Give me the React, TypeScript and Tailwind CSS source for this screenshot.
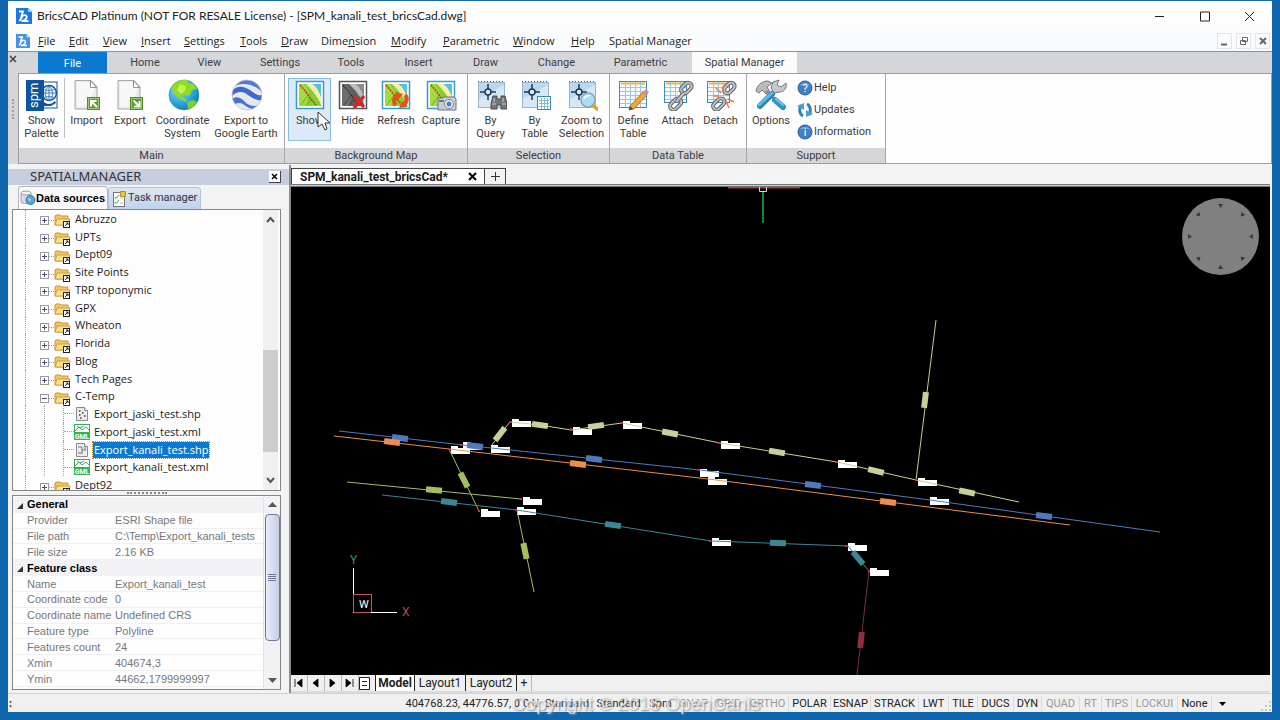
import React from "react";

type IconProps = { className?: string };

const menus = [
    { before: "", key: "F", after: "ile", width: "w-[31px]" },
    { before: "", key: "E", after: "dit", width: "w-[34px]" },
    { before: "", key: "V", after: "iew", width: "w-[38px]" },
    { before: "", key: "I", after: "nsert", width: "w-[43px]" },
    { before: "", key: "S", after: "ettings", width: "w-[56px]" },
    { before: "", key: "T", after: "ools", width: "w-[41px]" },
    { before: "", key: "D", after: "raw", width: "w-[40px]" },
    { before: "Dime", key: "n", after: "sion", width: "w-[70px]" },
    { before: "", key: "M", after: "odify", width: "w-[52px]" },
    { before: "", key: "P", after: "arametric", width: "w-[70px]" },
    { before: "", key: "W", after: "indow", width: "w-[58px]" },
    { before: "", key: "H", after: "elp", width: "w-[38px]" },
    { before: "Spatial Manager", key: "", after: "", width: "w-[90px]" },
];

const ribbonTabs = [
    { name: "Home", width: "w-[52px]" },
    { name: "View", width: "w-[53px]" },
    { name: "Settings", width: "w-[64px]" },
    { name: "Tools", width: "w-[54px]" },
    { name: "Insert", width: "w-[57px]" },
    { name: "Draw", width: "w-[53px]" },
    { name: "Change", width: "w-[65px]" },
    { name: "Parametric", width: "w-[79px]" },
    { name: "Spatial Manager", width: "w-[105px]" },
];

const treeRows = [
    { name: "Abruzzo", kind: "folder" },
    { name: "UPTs", kind: "folder" },
    { name: "Dept09", kind: "folder" },
    { name: "Site Points", kind: "folder" },
    { name: "TRP toponymic", kind: "folder" },
    { name: "GPX", kind: "folder" },
    { name: "Wheaton", kind: "folder" },
    { name: "Florida", kind: "folder" },
    { name: "Blog", kind: "folder" },
    { name: "Tech Pages", kind: "folder" },
    { name: "C-Temp", kind: "open" },
    { name: "Export_jaski_test.shp", kind: "points" },
    { name: "Export_jaski_test.xml", kind: "gml" },
    { name: "Export_kanali_test.shp", kind: "lines", selected: true },
    { name: "Export_kanali_test.xml", kind: "gml" },
    { name: "Dept92", kind: "folder" },
];

const properties = [
    { label: "General", head: true },
    { label: "Provider", value: "ESRI Shape file" },
    { label: "File path", value: "C:\\Temp\\Export_kanali_tests" },
    { label: "File size", value: "2.16 KB" },
    { label: "Feature class", head: true },
    { label: "Name", value: "Export_kanali_test" },
    { label: "Coordinate code", value: "0" },
    { label: "Coordinate name", value: "Undefined CRS" },
    { label: "Feature type", value: "Polyline" },
    { label: "Features count", value: "24" },
    { label: "Xmin", value: "404674,3" },
    { label: "Ymin", value: "44662,1799999997" },
];

/* ---------- ribbon icons ---------- */

const SpmIcon = () => (
    <svg width="32" height="32" viewBox="0 0 32 32">
        <rect x="14" y="3" width="17" height="26" fill="#fff" stroke="#0d56a0" />
        <circle cx="23" cy="14" r="7.500" fill="#eef4fb" stroke="#0d56a0" strokeWidth="1.500" />
        <path d="M23 7v15M15.500 14h15M17 10c4 2 8 2 12 0M17 19c4-2 8-2 12 0M23 7c-5 5-5 10 0 15M23 7c5 5 5 10 0 15" stroke="#2a6ab0" strokeWidth=".8" fill="none" />
        <path d="M16 21c4 5 9 5 13 1l1 2-5 3h-9z" fill="#0d56a0" />
        <path d="M18 1v31H0V1z" fill="#0a559e" />
        <text transform="translate(12 29) rotate(-90)" fontSize="13" fill="#fff" fontFamily="Roboto, sans-serif">spm</text>
    </svg>
);

const PageIcon = ({ out }: { out?: boolean }) => (
    <svg width="32" height="32" viewBox="0 0 32 32">
        <path d="M4 1.500h16l6 6V30H4z" fill="#e9eaea" stroke="#a6a8aa" />
        <path d="M6 3h12l6 8-10 17H6z" fill="#fafafa" opacity=".8" />
        <path d="M19.500 1.500v7h6z" fill="#fff" stroke="#777" strokeWidth=".8" />
        <rect x="16.500" y="18.500" width="12" height="12" fill="#5c9c2b" stroke="#4f8f22" />
        <rect x="17.500" y="19.500" width="10" height="10" fill="none" stroke="#9cc878" />
        {out ? (
            <path d="M19.500 21.500l5.500 5.500M25.500 22v5.500H20" stroke="#fff" strokeWidth="2" fill="none" />
        ) : (
            <path d="M26 28l-6-6M20 27.500V22h5.500" stroke="#fff" strokeWidth="2" fill="none" />
        )}
    </svg>
);

const GlobeIcon = () => (
    <svg width="32" height="32" viewBox="0 0 32 32">
        <defs>
            <radialGradient id="sea" cx=".35" cy=".3" r=".8">
                <stop offset="0" stopColor="#8fdcf8" />
                <stop offset=".6" stopColor="#2aa5dd" />
                <stop offset="1" stopColor="#0c6fae" />
            </radialGradient>
        </defs>
        <circle cx="17" cy="16" r="15" fill="url(#sea)" stroke="#2b87b5" strokeWidth=".6" />
        <path d="M8 4c4-3 9-4 12-3l2 3 5 1 3 5-5 1-2 5-3 1-4-2-1 3 5 3-1 2-6-3-5-4-4-7z" fill="#8edb2a" />
        <path d="M13 5l6 2-1 5-4 3-4-4z" fill="#c3f24a" />
        <path d="M20 23l6-2 4 2-4 5-5 2z" fill="#7ed321" />
    </svg>
);

const EarthIcon = () => (
    <svg width="32" height="32" viewBox="0 0 32 32">
        <defs>
            <clipPath id="ball">
                <circle cx="17" cy="16" r="15" />
            </clipPath>
        </defs>
        <g clipPath="url(#ball)">
            <rect width="33" height="32" fill="#e6e8f0" />
            <path d="M5 7c4-8 17-9 24-1l3 7C24 5 13 3 5 7z" fill="#5577cf" />
            <path d="M2 12c5-6 12-5 18-1 5 4 9 6 12 5v5c-7 1-12-4-17-7-5-2-9-1-13 3z" fill="#3f68cc" />
            <path d="M2 20c6-4 10 0 14 4 4 3 9 4 13 2l-3 4c-5 1-9-2-13-5-4-2-7-1-9 1z" fill="#4c72d2" />
        </g>
        <circle cx="17" cy="16" r="15" fill="none" stroke="#b7bfd8" strokeWidth=".8" />
    </svg>
);

const MapBase = ({ grey }: { grey?: boolean }) => (
    <g>
        <rect x="2.500" y="2.500" width="27" height="27" fill="#fff" stroke={grey ? "#555" : "#3a9cc0"} strokeWidth="1.500" />
        <rect x="5" y="5" width="22" height="22" fill={grey ? "#5e5e5e" : "#86cf2e"} />
        <path d="M5 5h5l5 9-3 13H5z" fill={grey ? "#6e6e6e" : "#a2dc3c"} />
        <path d="M12 5h9l6 12v9c-3-8-8-14-15-21z" fill={grey ? "#bdbdbd" : "#f6edb0"} />
        <path d="M18 5h9v14c-1-6-4-11-9-14z" fill={grey ? "#8b8b8b" : "#55bfe4"} />
        <path d="M14 16l-7 10M17 20l-5 7" stroke={grey ? "#444" : "#6fae2a"} />
        <path d="M6 6l6 7 5 7 5 6" stroke={grey ? "#333" : "#b5391f"} strokeWidth="1.500" strokeDasharray="2 1" fill="none" />
    </g>
);

const ShowIcon = () => (
    <svg width="32" height="32" viewBox="0 0 32 32">
        <MapBase />
    </svg>
);
const HideIcon = () => (
    <svg width="32" height="32" viewBox="0 0 32 32">
        <MapBase grey />
        <path d="M17 18l10 10M27 17L17 29" stroke="#d9242e" strokeWidth="3.500" />
    </svg>
);
const RefreshIcon = () => (
    <svg width="32" height="32" viewBox="0 0 32 32">
        <MapBase />
        <path d="M16 26a6 6 0 0 1 2-10M25 16a6 6 0 0 1-3 10" stroke="#e2541a" strokeWidth="4" fill="none" />
        <path d="M15 13l8 2-5 6zM28 28l-9 1 3-7z" fill="#e2541a" />
    </svg>
);
const CaptureIcon = () => (
    <svg width="32" height="32" viewBox="0 0 32 32">
        <MapBase />
        <path d="M13 19h4l2-1h10l2 2v11H13z" fill="#c9ccd2" stroke="#70747c" />
        <rect x="14" y="21" width="5" height="2" fill="#70747c" />
        <circle cx="24" cy="25" r="4.500" fill="#f2f4f7" stroke="#7d828c" />
        <circle cx="24" cy="25" r="2.500" fill="#4c7fc9" />
    </svg>
);

const QueryBase = () => (
    <g>
        <rect x="3.500" y="3.500" width="26" height="25" fill="#bcd8ee" stroke="#9bb4c8" />
        <path d="M4 20L29 6v22H4z" fill="#d7e8f5" />
        <path d="M3 2.500h27" stroke="#555" strokeDasharray="1 2" />
        <path d="M13 5v16M5 13h16" stroke="#1c3b55" strokeWidth="1.500" />
        <circle cx="13" cy="13" r="3" fill="#d9ebf8" stroke="#1c3b55" strokeWidth="1.500" />
    </g>
);
const ByQueryIcon = () => (
    <svg width="32" height="32" viewBox="0 0 32 32">
        <QueryBase />
        <path d="M18 17h4v3h4v-3h4l2 8v5h-6v-4h-4v4h-6v-5z" fill="#74777a" stroke="#484a4c" />
        <path d="M17 25h4M27 25h4M19 19v4M28 19v4" stroke="#c6c9cb" />
    </svg>
);
const ByTableIcon = () => (
    <svg width="32" height="32" viewBox="0 0 32 32">
        <QueryBase />
        <rect x="18.500" y="17.500" width="13" height="13" fill="#fff" stroke="#3a87b8" />
        <path d="M22.500 19v11M25.500 19v11M28.500 19v11M20 21.500h10M20 24.500h10M20 27.500h10" stroke="#8ab9d6" />
    </svg>
);
const ZoomIcon = () => (
    <svg width="32" height="32" viewBox="0 0 32 32">
        <QueryBase />
        <path d="M27 26l4 4" stroke="#d6a62c" strokeWidth="3.500" strokeLinecap="round" />
        <circle cx="22" cy="21" r="7" fill="#a8dcf5" fillOpacity=".9" stroke="#8fa3b0" strokeWidth="1.500" />
        <path d="M18 20c1-3 4-4 6-3" stroke="#fff" strokeWidth="1.500" fill="none" />
    </svg>
);

const GridBase = ({ small }: { small?: boolean }) => (
    <g>
        <rect x="2.500" y="2.500" width={small ? 22 : 27} height={small ? 21 : 26} fill="#f4faff" stroke="#3d8bb5" />
        <path d={small ? "M4 4.500h19" : "M4 4.500h24"} stroke="#e8b63c" strokeWidth="2" />
        <path d={small ? "M8.500 3v20M13.500 3v20M18.500 3v20M3 8.500h21M3 12.500h21M3 16.500h21M3 20.500h21" : "M8.500 3v25M13.500 3v25M18.500 3v25M23.500 3v25M3 8.500h26M3 12.500h26M3 16.500h26M3 20.500h26M3 24.500h26"} stroke="#9cc7df" />
    </g>
);
const DefineIcon = () => (
    <svg width="32" height="32" viewBox="0 0 32 32">
        <GridBase />
        <path d="M13 27L26 13l4 3-13 14-5 1z" fill="#f0a63a" stroke="#9c6518" strokeWidth=".8" />
        <path d="M26 13l3-3 3 3-2 3z" fill="#c98daf" />
        <path d="M12 31l1-4 3 3z" fill="#5b4522" />
    </svg>
);
const Links = () => (
    <g fill="none">
        <g stroke="#606366" strokeWidth="4">
            <rect x="19" y="6" width="12" height="7" rx="3.500" transform="rotate(-45 24 10)" />
            <rect x="7" y="22" width="13" height="7" rx="3.500" transform="rotate(-45 13 25)" />
        </g>
        <g stroke="#bfc2c5" strokeWidth="2">
            <rect x="19" y="6" width="12" height="7" rx="3.500" transform="rotate(-45 24 10)" />
            <rect x="7" y="22" width="13" height="7" rx="3.500" transform="rotate(-45 13 25)" />
        </g>
    </g>
);
const AttachIcon = () => (
    <svg width="32" height="32" viewBox="0 0 32 32">
        <GridBase small />
        <Links />
        <path d="M15 22l7-8" stroke="#606366" strokeWidth="4" />
        <path d="M15 22l7-8" stroke="#c6c9cc" strokeWidth="2" />
    </svg>
);
const DetachIcon = () => (
    <svg width="32" height="32" viewBox="0 0 32 32">
        <GridBase small />
        <Links />
        <path d="M16 14l-5-5M18 13V7M14 17H8M23 20l6 3M21 22l3 7" stroke="#ee7a37" strokeWidth="1.500" />
    </svg>
);
const OptionsIcon = () => (
    <svg width="32" height="32" viewBox="0 0 32 32">
        <path d="M1 12C2 6 7 2 13 2l4 2-5 4 3 5-4 2-4-4-3 3z" fill="#b9bcbf" stroke="#77797c" />
        <path d="M18 3l6-2-2 5 4 2 5-4c1 5-1 8-6 9l-6 1-3-5z" fill="#c6c8ca" stroke="#77797c" />
        <path d="M11 12l8 8" stroke="#8d9093" strokeWidth="3" />
        <path d="M17 15L5 27" stroke="#2685b8" strokeWidth="6" strokeLinecap="round" />
        <path d="M17 14L4 26" stroke="#62b9e4" strokeWidth="3" strokeLinecap="round" />
        <path d="M20 21l8 7" stroke="#2f93c7" strokeWidth="6" strokeLinecap="round" />
        <path d="M21 20l7 6" stroke="#74c3e8" strokeWidth="2" strokeLinecap="round" />
    </svg>
);

const RoundBadge = ({ glyph }: { glyph: string }) => (
    <svg width="16" height="16" viewBox="0 0 16 16">
        <circle cx="8" cy="8" r="7" fill="#3f7fc6" stroke="#2a5b98" />
        <path d="M2.500 6a6 5 0 0 1 11 0c-3-2-8-2-11 0z" fill="#7fb0e2" />
        <text x="8" y="12" textAnchor="middle" fontSize="11" fill="#fff" fontFamily="Roboto, sans-serif">{glyph}</text>
    </svg>
);
const UpdatesIcon = () => (
    <svg width="16" height="16" viewBox="0 0 16 16">
        <path d="M6 14C2 12 2 6 4 3M10 2c4 2 4 8 2 11" stroke="#3183b4" strokeWidth="3" fill="none" />
        <path d="M0 4l7-3v7zM16 12l-7 3V8z" fill="#4f9dcc" />
    </svg>
);

const AppLogo = ({ className }: IconProps) => (
    <svg className={className} viewBox="0 0 16 16">
        <path d="M0 0h12l4 4v12H0z" fill="#1a78e0" />
        <path d="M12 0l4 4h-4z" fill="#9cc9f7" />
        <path d="M3 3.500h4L5 9.500M3.500 13l3-5c3-2 5 0 4 2s-3 3-5 3h7" stroke="#fff" strokeWidth="1.800" fill="none" />
    </svg>
);

/* ---------- ribbon ---------- */

const BigButton: React.FC<{ icon: React.ReactNode; lines: string[]; width: string; active?: boolean }> = ({ icon, lines, width, active }) => (
    <button className={`flex h-[63px] shrink-0 flex-col items-center border ${width} ${active ? "border-[#86bbe4] bg-[#dce9f7]" : "border-transparent"}`}>
        {icon}
        <span className="mt-[3px] flex flex-col leading-[13px] whitespace-nowrap">
            {lines.map((line) => (
                <span key={line}>{line}</span>
            ))}
        </span>
    </button>
);

const Group: React.FC<{ title: string; width: string; children: React.ReactNode }> = ({ title, width, children }) => (
    <div className={`flex shrink-0 flex-col border-r border-[#a4a7ac] ${width}`}>
        <div className="flex flex-1 items-start pt-1">{children}</div>
        <div className="h-[15px] bg-[#d5d6da] text-center leading-[15px]">{title}</div>
    </div>
);

const Ribbon = () => (
    <div className="flex h-[113px] shrink-0 border-t border-[#8f9194] bg-[#d5d6da] font-['Roboto',sans-serif] text-[11px] text-[#3c3c40]">
        <div className="flex w-[10px] flex-col items-center">
            <button aria-label="Close ribbon" className="mt-[3px]">
                <svg width="8" height="8" viewBox="0 0 8 8">
                    <path d="M1 1l6 6M7 1L1 7" stroke="#444" strokeWidth="1.500" />
                </svg>
            </button>
            <div className="mt-9 h-5 border-l-2 border-dotted border-[#a0a2a6]" />
        </div>
        <div className="flex min-w-0 flex-1 flex-col">
            <div className="flex h-[21px] gap-3 pl-5">
                <button className="w-[69px] bg-[#0c79d1] pt-1 text-white">File</button>
                {ribbonTabs.map((tab) => (
                    <button key={tab.name} className={`pt-0.5 whitespace-nowrap ${tab.width} ${tab.name === "Spatial Manager" ? "bg-[#fbfbfc]" : ""}`}>
                        {tab.name}
                    </button>
                ))}
            </div>
            <div className="flex flex-1 border border-[#9b9da1] bg-[#fdfdfd]">
                <Group title="Main" width="w-[266px]">
                    <BigButton icon={<SpmIcon />} lines={["Show", "Palette"]} width="w-[45px]" />
                    <div className="h-[60px] w-px bg-[#bcbdc0]" />
                    <BigButton icon={<PageIcon />} lines={["Import"]} width="w-[43px]" />
                    <BigButton icon={<PageIcon out />} lines={["Export"]} width="w-[44px]" />
                    <BigButton icon={<GlobeIcon />} lines={["Coordinate", "System"]} width="w-[61px]" />
                    <BigButton icon={<EarthIcon />} lines={["Export to", "Google Earth"]} width="w-[66px]" />
                </Group>
                <Group title="Background Map" width="w-[183px]">
                    <div className="relative ml-[3px]">
                        <BigButton icon={<ShowIcon />} lines={["Show"]} width="w-[43px]" active />
                        <svg className="absolute top-[33px] left-[29px]" width="14" height="20" viewBox="0 0 14 20">
                            <path d="M1 1v15l4-3 3 6 2-1-2-6h5z" fill="#fff" stroke="#333" />
                        </svg>
                    </div>
                    <BigButton icon={<HideIcon />} lines={["Hide"]} width="w-[43px]" />
                    <BigButton icon={<RefreshIcon />} lines={["Refresh"]} width="w-[44px]" />
                    <BigButton icon={<CaptureIcon />} lines={["Capture"]} width="w-[46px]" />
                </Group>
                <Group title="Selection" width="w-[142px]">
                    <BigButton icon={<ByQueryIcon />} lines={["By", "Query"]} width="w-[45px]" />
                    <BigButton icon={<ByTableIcon />} lines={["By", "Table"]} width="w-[43px]" />
                    <BigButton icon={<ZoomIcon />} lines={["Zoom to", "Selection"]} width="w-[51px]" />
                </Group>
                <Group title="Data Table" width="w-[137px]">
                    <BigButton icon={<DefineIcon />} lines={["Define", "Table"]} width="w-[46px]" />
                    <BigButton icon={<AttachIcon />} lines={["Attach"]} width="w-[43px]" />
                    <BigButton icon={<DetachIcon />} lines={["Detach"]} width="w-[43px]" />
                </Group>
                <Group title="Support" width="w-[139px]">
                    <BigButton icon={<OptionsIcon />} lines={["Options"]} width="w-[48px]" />
                    <div className="ml-0.5 flex flex-col gap-1.5 pt-0.5">
                        <button className="flex h-4 items-center gap-px">
                            <RoundBadge glyph="?" />
                            Help
                        </button>
                        <button className="flex h-4 items-center gap-px">
                            <UpdatesIcon />
                            Updates
                        </button>
                        <button className="flex h-4 items-center gap-px">
                            <RoundBadge glyph="i" />
                            Information
                        </button>
                    </div>
                </Group>
            </div>
        </div>
    </div>
);

/* ---------- palette ---------- */

const FolderIcon = () => (
    <svg width="17" height="15" viewBox="0 0 17 15">
        <path d="M1 12V3l1-1h4l1 1h7v9z" fill="#f2c65a" stroke="#c9973a" />
        <path d="M1 12l2-6h13l-2 6z" fill="#fbe08e" stroke="#cfa045" />
        <rect x="9.500" y="8.500" width="6" height="6" fill="#fff" stroke="#222" />
        <path d="M11 13l3-3M12 10h2v2" stroke="#222" fill="none" />
    </svg>
);

const FileIcon = ({ kind }: { kind: string }) =>
    kind === "gml" ? (
        <svg width="16" height="16" viewBox="0 0 16 16">
            <rect x=".5" y=".5" width="15" height="15" fill="#fff" stroke="#3aab5d" />
            <path d="M1 7l4-4 3 3 4-3 3 3M3 2l3 2 4-2" stroke="#3aab5d" fill="none" />
            <rect x="0" y="8" width="16" height="8" fill="#2fb457" />
            <text x="8" y="15" textAnchor="middle" fontSize="7" fontWeight="700" fill="#fff" fontFamily="Roboto, sans-serif">GML</text>
        </svg>
    ) : (
        <svg width="16" height="16" viewBox="0 0 16 16">
            <path d="M2.500 1.500h8l3 3v10h-11z" fill="#ececec" stroke="#8b8b8b" />
            <path d="M10.500 1.500v3h3" fill="#fff" stroke="#8b8b8b" />
            {kind === "points" ? (
                <path d="M5 5h1.500M8 7h1.500M5 9h1.500M10 10h1.500M6 12h1.500" stroke="#444" strokeWidth="1.500" />
            ) : (
                <path d="M4 5h4v7M8 8h4M4 11h4M11 5v3" stroke="#777" fill="none" />
            )}
        </svg>
    );

const Expander = ({ open }: { open?: boolean }) => (
    <svg width="9" height="9" viewBox="0 0 9 9">
        <rect x=".5" y=".5" width="8" height="8" fill="#fff" stroke="#9a9a9a" />
        <path d={open ? "M2 4.500h5" : "M2 4.500h5M4.500 2v5"} stroke="#44506e" />
    </svg>
);

const Tree = () => (
    <div className="flex h-[282px] shrink-0 overflow-hidden border border-[#85878b] bg-[#fdfdfd] font-['Open_Sans',sans-serif] text-[11px] text-[#1c1c1c]">
        <ul className="flex h-[284px] min-w-0 flex-1 flex-col pl-3">
            {treeRows.map((row) => {
                const leaf = !["folder", "open"].includes(row.kind);
                return (
                    <li key={row.name} className="flex min-h-0 flex-1 items-center border-l border-dotted border-[#a5a5a5]">
                        {leaf ? (
                            <>
                                <span className="ml-[18px] w-[19px] self-stretch border-l border-dotted border-[#a5a5a5]" />
                                <span className="w-[11px] self-stretch border-l border-dotted border-[#a5a5a5] pt-2">
                                    <span className="block border-t border-dotted border-[#a5a5a5]" />
                                </span>
                                <FileIcon kind={row.kind} />
                                <span className={`ml-[3px] px-px leading-4 ${row.selected ? "bg-[#0c79d1] text-white outline outline-dotted outline-[#c08040]" : ""}`}>{row.name}</span>
                            </>
                        ) : (
                            <>
                                <button aria-label={`Toggle ${row.name}`} className="mt-1 ml-3.5">
                                    <Expander open={row.kind === "open"} />
                                </button>
                                <span className="mt-1 w-[5px] border-t border-dotted border-[#a5a5a5]" />
                                <span className="mt-1">
                                    <FolderIcon />
                                </span>
                                <span className="ml-1 leading-4">{row.name}</span>
                            </>
                        )}
                    </li>
                );
            })}
        </ul>
        <div className="mr-0.5 flex w-[15px] flex-col items-center bg-[#f0f0f0] py-1.5">
            <svg width="9" height="7" viewBox="0 0 9 7">
                <path d="M1 6l3.500-4L8 6" stroke="#555" strokeWidth="2" fill="none" />
            </svg>
            <div className="mt-[127px] h-[102px] w-full bg-[#cdcdcd]" />
            <svg className="mt-auto" width="9" height="7" viewBox="0 0 9 7">
                <path d="M1 1l3.500 4L8 1" stroke="#555" strokeWidth="2" fill="none" />
            </svg>
        </div>
    </div>
);

const PropertyGrid = () => (
    <div className="flex min-h-0 flex-1 overflow-hidden border border-[#85878b] bg-[#fdfdfd] font-['Liberation_Sans',sans-serif] text-[11px] text-[#77787c]">
        <div className="min-w-0 flex-1 pt-px">
            <table className="h-[190px] w-full table-fixed border-collapse">
                <colgroup>
                    <col className="w-[102px]" />
                    <col />
                </colgroup>
                <tbody>
                    {properties.map((row) =>
                        row.head ? (
                            <tr key={row.label} className="bg-[#f2f2f4]">
                                <th colSpan={2} className="p-0 text-left leading-[15px] text-black">
                                    <svg className="mr-1 ml-1 inline-block" width="6" height="6" viewBox="0 0 6 6">
                                        <path d="M6 0v6H0z" fill="#333" />
                                    </svg>
                                    {row.label}
                                </th>
                            </tr>
                        ) : (
                            <tr key={row.label}>
                                <td className="border-b border-[#f0f0f1] p-0 pl-3.5 leading-[14px] whitespace-nowrap">{row.label}</td>
                                <td className="border-b border-[#f0f0f1] p-0 leading-[14px] whitespace-nowrap">{row.value}</td>
                            </tr>
                        ),
                    )}
                </tbody>
            </table>
        </div>
        <div className="flex w-[17px] flex-col items-center border-l border-[#e4e4e6] bg-[#f2f2f5]">
            <svg className="mt-1.5" width="9" height="5" viewBox="0 0 9 5">
                <path d="M0 5l4.500-5L9 5z" fill="#55575c" />
            </svg>
            <div className="mt-[7px] flex h-[127px] w-[15px] flex-col items-center justify-center gap-px rounded-sm border border-[#6d7896] bg-linear-to-r from-[#e9edf7] to-[#c5cee6]">
                <span className="h-px w-2 bg-[#6d7896]" />
                <span className="h-px w-2 bg-[#6d7896]" />
                <span className="h-px w-2 bg-[#6d7896]" />
                <span className="h-px w-2 bg-[#6d7896]" />
            </div>
            <svg className="mt-auto mb-1.5" width="9" height="5" viewBox="0 0 9 5">
                <path d="M0 0l4.500 5L9 0z" fill="#55575c" />
            </svg>
        </div>
    </div>
);

const Palette = () => (
    <aside className="flex w-[283px] shrink-0 flex-col border-r-2 border-[#8a8c90] pt-1">
        <div className="flex h-4 items-center bg-[#c5cddf] pl-[22px] font-['Noto_Sans',sans-serif] text-[13px] text-[#333]">
            <span className="flex-1">SPATIALMANAGER</span>
            <button aria-label="Close palette" className="mr-2 border-r border-b border-[#444] bg-white p-0.5">
                <svg width="7" height="7" viewBox="0 0 7 7">
                    <path d="M1 1l5 5M6 1L1 6" stroke="#000" strokeWidth="1.500" />
                </svg>
            </button>
        </div>
        <div className="flex min-h-0 flex-1 flex-col pr-2 pl-1">
            <div className="flex h-6 items-end pl-1.5">
                <button className="flex h-[23px] w-[90px] items-center rounded-t border border-b-0 border-[#b5b6b9] bg-[#fafafa] pl-px font-['Liberation_Sans',sans-serif] text-[11px] font-bold whitespace-nowrap text-black">
                    <svg className="shrink-0" width="16" height="16" viewBox="0 0 16 16">
                        <path d="M1 3v9c1 2 9 2 10 0V3z" fill="#d9dde1" stroke="#9aa0a6" />
                        <ellipse cx="6" cy="3" rx="5" ry="2" fill="#f1f3f5" stroke="#9aa0a6" />
                        <circle cx="10.500" cy="10" r="4.500" fill="#58a5d6" stroke="#2f77a8" />
                        <path d="M8 8l3 1-1 3z" fill="#c0e0f2" />
                    </svg>
                    Data sources
                </button>
                <button className="flex h-[22px] w-[93px] items-center rounded-t border border-b-0 border-[#b5c3d8] bg-linear-to-b from-[#dfe8f5] to-[#bfd1ec] pl-[3px] font-['Roboto',sans-serif] text-[11px] whitespace-nowrap text-[#30343c]">
                    <svg className="shrink-0" width="16" height="16" viewBox="0 0 16 16">
                        <rect x="1.500" y="1.500" width="11" height="14" fill="#fff" stroke="#777" />
                        <path d="M3 6l1 1.500L7 4M3 11l1 1.500L7 9" stroke="#3aa64a" fill="none" />
                        <path d="M8 7h3M8 12h3" stroke="#bbb" />
                        <path d="M8.500.5h5v5h-5z" fill="#ecc63a" stroke="#b48f1b" />
                    </svg>
                    Task manager
                </button>
            </div>
            <Tree />
            <div className="mx-auto my-px h-0 w-10 border-t-2 border-dotted border-[#888]" />
            <PropertyGrid />
            <div className="h-[3px]" />
        </div>
    </aside>
);

/* ---------- drawing ---------- */

const lightGreen = "#c5d19a";
const green = "#a3be5c";
const blue = "#5079bd";
const orange = "#ed8e4a";
const teal = "#3c8796";

const polylines = [
    { pts: "491,446 510,422 540,425 571,430 622,423 720,443 837,462 916,480 1019,502", color: lightGreen },
    { pts: "916,480 936,320", color: lightGreen },
    { pts: "347,482 521,499", color: green },
    { pts: "449,449 479,511", color: green },
    { pts: "517,510 534,592", color: green },
    { pts: "382,495 517,510 711,541 848,546 869,571", color: teal },
    { pts: "869,571 857,675", color: "#7c2f42" },
    { pts: "334,436 449,449 708,479 1070,525", color: orange },
    { pts: "339,431 463,445 700,470 930,500 1160,532", color: blue },
];

const labels = [
    [512, 419], [573, 427], [623, 421], [721, 441], [838, 460], [918, 478], [463, 442], [451, 446], [491, 445],
    [700, 469], [708, 477], [523, 497], [481, 509], [517, 507], [712, 538], [848, 543], [870, 568], [930, 497],
];

// x, y, angle, colour
const chips: [number, number, number, string][] = [
    [400, 438, 7, blue], [475, 446, 7, blue], [594, 459, 7, blue], [813, 485, 7, blue], [1044, 516, 7, blue],
    [392, 442, 7, orange], [578, 464, 7, orange], [888, 502, 7, orange],
    [500, 434, -52, lightGreen], [540, 425, 8, lightGreen], [596, 426, -8, lightGreen], [670, 433, 11, lightGreen],
    [777, 452, 10, lightGreen], [876, 471, 13, lightGreen], [967, 492, 12, lightGreen], [925, 400, -83, lightGreen],
    [464, 480, 63, green], [434, 490, 5, green], [525, 551, 78, green],
    [449, 502, 7, teal], [613, 525, 8, teal], [778, 543, 2, teal], [858, 558, 50, teal],
    [861, 640, -84, "#8c2f40"],
];

const nodes = [[510, 422], [571, 429], [622, 423], [719, 443], [836, 462], [916, 480], [449, 449], [461, 445], [699, 470], [521, 499], [479, 511], [516, 510], [710, 541], [846, 546], [869, 571]];

const Drawing = () => (
    <div className="relative min-h-0 flex-1 overflow-hidden bg-black">
        <svg className="h-full w-full" viewBox="291 187 979 488" preserveAspectRatio="xMinYMin meet" fontFamily="Roboto, sans-serif">
            {labels.map(([x, y]) => (
                <path key={`${x}-${y}`} d={`M${x} ${y}h7v2h12v6h-19z`} fill="#fff" />
            ))}
            {polylines.map((line) => (
                <polyline key={line.pts} points={line.pts} fill="none" stroke={line.color} />
            ))}
            {chips.map(([x, y, angle, color]) => (
                <rect key={`${x}-${y}`} x={x - 8} y={y - 3} width="16" height="6" fill={color} transform={`rotate(${angle} ${x} ${y})`} />
            ))}
            {nodes.map(([x, y]) => (
                <rect key={`${x}-${y}`} x={x - 1} y={y - 1} width="2" height="2" fill="#d02840" />
            ))}
            <path d="M728 187.500h72" stroke="#c02c44" strokeWidth="2" />
            <path d="M763 192v31" stroke="#1fae52" strokeWidth="1.500" />
            <path d="M759.500 187v4.500h7V187" stroke="#ddd" fill="none" />
            <path d="M353.500 568v44.500H397" stroke="#fff" fill="none" />
            <path d="M354 594.500h17M354 612.500h17" stroke="#c0506a" />
            <path d="M371.500 594v18M353.500 594v18" stroke="#2fa070" />
            <text x="350" y="564" fontSize="12" fill="#2b9468">Y</text>
            <text x="402" y="616" fontSize="12" fill="#a8506c">X</text>
            <text x="359" y="608" fontSize="11" fill="#fff">W</text>
        </svg>
        <svg className="absolute top-[11px] right-[11px]" width="77" height="77" viewBox="-38 -38 76 76">
            <circle r="38" fill="#808080" />
            {[0, 45, 90, 135, 180, 225, 270, 315].map((a) => (
                <path key={a} d="M-2.500-32h5L0-28z" fill="#3c3c3c" transform={`rotate(${a})`} />
            ))}
        </svg>
    </div>
);

const LayoutTabs = () => (
    <div className="flex h-4 shrink-0 items-stretch bg-[#efefef] text-[12px] leading-4 text-[#222]">
        {["M2 1v8M9 1L4 5l5 4z", "M8 1L3 5l5 4z", "M3 1l5 4-5 4z", "M2 1l5 4-5 4zM9 1v8"].map((d, i) => (
            <button key={d} aria-label={["First", "Previous", "Next", "Last"][i]} className="flex w-[17px] items-center border-r border-[#bbb] pl-0.5">
                <svg width="11" height="10" viewBox="0 0 11 10">
                    <path d={d} fill="#000" stroke="#000" strokeWidth=".8" />
                </svg>
            </button>
        ))}
        <button aria-label="Layout list" className="flex w-[16px] items-center">
            <svg width="12" height="13" viewBox="0 0 12 13">
                <path d="M.5.5h10v12H.5zM3 4.500h5M3 8.500h5" fill="#fff" stroke="#222" />
            </svg>
        </button>
        <button className="w-[40px] border-x border-[#222] bg-white font-bold">Model</button>
        <button className="w-[51px] border-r border-[#222]">Layout1</button>
        <button className="w-[51px] border-r border-[#222]">Layout2</button>
        <button className="w-[15px] border-r border-[#bbb]">+</button>
    </div>
);

/* ---------- status bar ---------- */

const toggles = [
    { name: "SNAP", width: "w-[35px]", off: true },
    { name: "GRID", width: "w-[35px]", off: true },
    { name: "ORTHO", width: "w-[42px]", off: true },
    { name: "POLAR", width: "w-[42px]" },
    { name: "ESNAP", width: "w-[40px]" },
    { name: "STRACK", width: "w-[48px]" },
    { name: "LWT", width: "w-[30px]" },
    { name: "TILE", width: "w-[29px]" },
    { name: "DUCS", width: "w-[36px]" },
    { name: "DYN", width: "w-[28px]" },
    { name: "QUAD", width: "w-[38px]", off: true },
    { name: "RT", width: "w-[22px]", off: true },
    { name: "TIPS", width: "w-[30px]", off: true },
    { name: "LOCKUI", width: "w-[46px]", off: true },
    { name: "None", width: "w-[34px]" },
];

const StatusBar = () => (
    <footer className="relative flex h-[19px] shrink-0 items-center justify-end border-t border-[#d2d2d4] bg-[#f0f0f0] pt-0.5 font-['Roboto',sans-serif] text-[11px] text-[#222]">
        <span className="mr-auto pl-px font-bold">:</span>
        <span className="whitespace-nowrap">404768.23, 44776.57, 0</span>
        <button className="w-[22px]">0 U</button>
        <button className="w-[51px] border-r border-[#ddd]">Standard</button>
        <button className="w-[52px] border-r border-[#ddd]">Standard</button>
        <button className="w-[32px] border-r border-[#ddd]">Spm</button>
        {toggles.map((t) => (
            <button key={t.name} className={`border-r border-[#dcdcde] ${t.width} ${t.off ? "text-[#98999c]" : ""}`}>
                {t.name}
            </button>
        ))}
        <button aria-label="Status bar menu" className="flex w-[20px] justify-center">
            <svg width="7" height="4" viewBox="0 0 7 4">
                <path d="M0 0h7L3.500 4z" fill="#000" />
            </svg>
        </button>
        <svg className="ml-7 self-end" width="12" height="12" viewBox="0 0 12 12">
            <path d="M9 1h2v2H9zM9 5h2v2H9zM5 5h2v2H5zM9 9h2v2H9zM5 9h2v2H5zM1 9h2v2H1z" fill="#c4c4c6" />
        </svg>
        <span className="pointer-events-none absolute inset-x-0 pr-2 text-center font-['Liberation_Sans',sans-serif] text-[19px] leading-5 whitespace-nowrap text-white/70 text-shadow-[1px_1px_2px_#888]">Copyright © 2016 OpenCanis</span>
    </footer>
);

const App: React.FC = () => {
    return (
        <div className="flex h-screen flex-col overflow-hidden bg-[#1067ae] px-2 pt-px pb-2">
            <header className="flex h-[30px] shrink-0 items-center bg-[#fdfdfe] pl-2 font-['Lato',sans-serif] text-[12px] text-[#222]">
                <AppLogo className="h-4 w-4" />
                <h1 className="ml-[5px] flex-1 whitespace-nowrap">BricsCAD Platinum (NOT FOR RESALE License) - [SPM_kanali_test_bricsCad.dwg]</h1>
                <div className="flex">
                    {["M1 5.500h9", "M1.500 1h9v9h-9z", "M1 1l9 9M10 1l-9 9"].map((d, i) => (
                        <button key={d} aria-label={["Minimize", "Maximize", "Close"][i]} className="flex w-[45px] justify-center">
                            <svg width="11" height="11" viewBox="0 0 11 11">
                                <path d={d} fill="none" stroke="#222" />
                            </svg>
                        </button>
                    ))}
                </div>
            </header>
            <nav className="flex h-5 shrink-0 items-center bg-[#fafbfd] pr-0.5 pl-2 font-['Open_Sans',sans-serif] text-[11px] text-[#222]">
                <AppLogo className="mr-2 h-3.5 w-3.5 opacity-80" />
                <div className="flex flex-1">
                    {menus.map(({ before, key, after, width }) => (
                        <button key={before + key + after} className={`text-left whitespace-nowrap ${width}`}>
                            {before}
                            <u>{key}</u>
                            {after}
                        </button>
                    ))}
                </div>
                {["M1 8.500h6", "M3.500 1.500h5v4h-5zM1.500 4.500h5v4h-5z", "M2 2l6 6M8 2L2 8"].map((d, i) => (
                    <button key={d} aria-label={["Minimize drawing", "Restore drawing", "Close drawing"][i]} className="ml-1 flex h-4 w-[15px] items-center justify-center border border-[#e4e5ea]">
                        <svg width="10" height="10" viewBox="0 0 10 10">
                            <path d={d} fill="none" stroke="#666" strokeWidth={i === 1 ? 1 : 2} />
                        </svg>
                    </button>
                ))}
            </nav>
            <Ribbon />
            <div className="flex min-h-0 flex-1 bg-[#f3f3f4] pt-px">
                <Palette />
                <main className="flex min-w-0 flex-1 flex-col pt-[3px] pr-0.5 font-['Roboto',sans-serif]">
                    <div className="flex h-4 shrink-0 text-[12px] text-[#222]">
                        <div className="flex w-[194px] items-center justify-between border-x border-t border-[#444] bg-white pr-[7px] pl-2 leading-[14px] font-bold whitespace-nowrap">
                            SPM_kanali_test_bricsCad*
                            <button aria-label="Close drawing tab">
                                <svg width="9" height="9" viewBox="0 0 9 9">
                                    <path d="M1 1l7 7M8 1L1 8" stroke="#000" strokeWidth="2" />
                                </svg>
                            </button>
                        </div>
                        <button aria-label="New drawing" className="flex w-[21px] items-center justify-center border-t border-r border-[#444]">
                            <svg width="9" height="9" viewBox="0 0 9 9">
                                <path d="M0 4.500h9M4.500 0v9" stroke="#333" />
                            </svg>
                        </button>
                    </div>
                    <div className="h-[3px] shrink-0 border-y border-[#77797a] bg-[#c8c8c8]" />
                    <Drawing />
                    <LayoutTabs />
                    <div className="h-[2px] shrink-0 bg-[#dcdcdc]" />
                </main>
            </div>
            <StatusBar />
        </div>
    );
};

export default App;
